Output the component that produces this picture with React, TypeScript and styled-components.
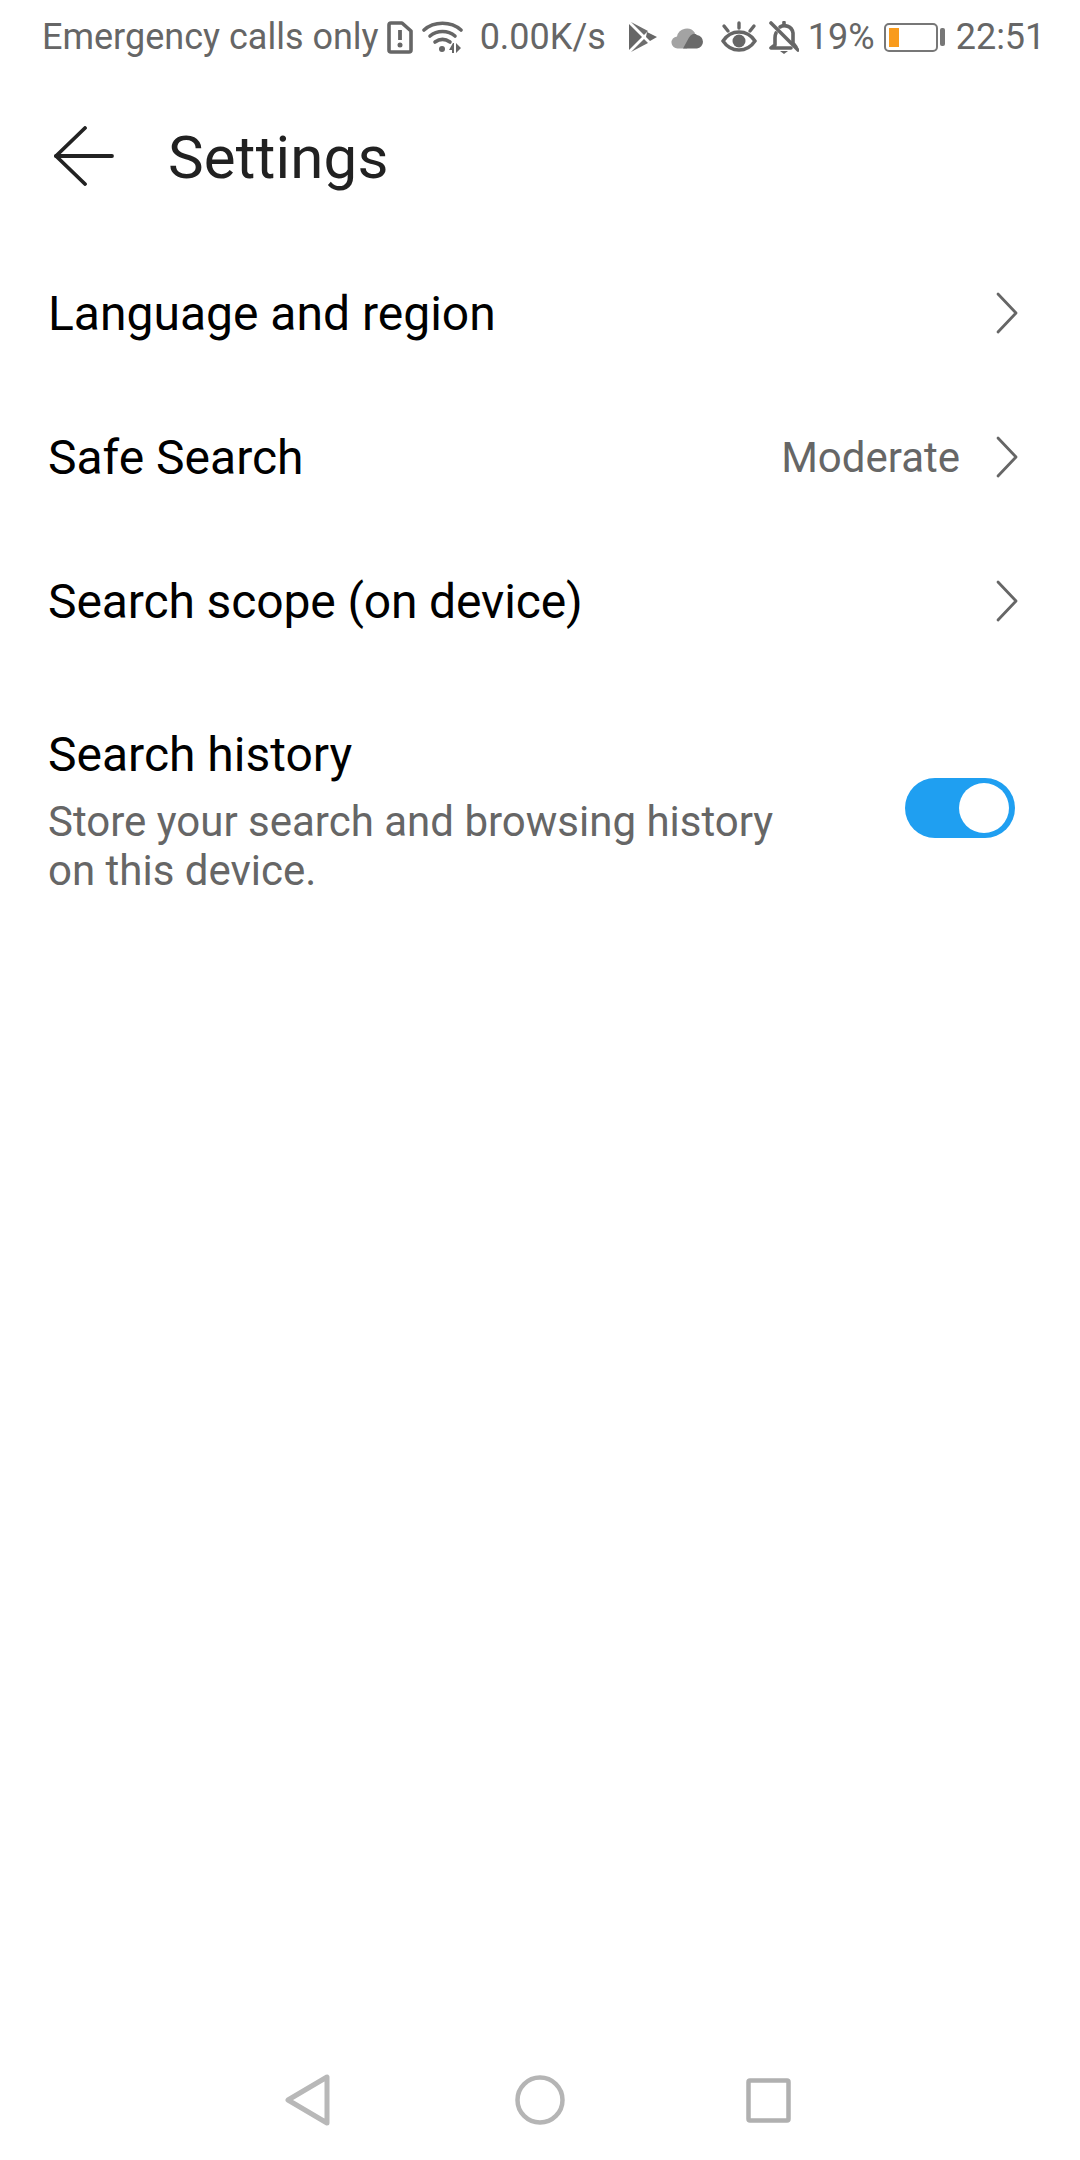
import React from "react";
import styled, { createGlobalStyle } from "styled-components";

const GlobalStyle = createGlobalStyle`
  html, body { margin: 0; padding: 0; background: #fff; }
  body { font-family: Roboto, "Liberation Sans", sans-serif; }
`;

function SimIcon() {
  return (
    <svg width="26" height="33" viewBox="0 0 26 33" fill="none">
      <path d="M4 2h11l9 8v19a2 2 0 0 1-2 2H4a2 2 0 0 1-2-2V4a2 2 0 0 1 2-2z" stroke="#666" strokeWidth="3.600" strokeLinejoin="round" />
      <path d="M13 9v10" stroke="#666" strokeWidth="3.800" />
      <circle cx="13" cy="24" r="2.500" fill="#666" />
    </svg>
  );
}

function WifiIcon() {
  return (
    <svg width="41" height="33" viewBox="0 0 41 33" fill="none" stroke="#666" strokeWidth="3.600" strokeLinecap="round">
      <path d="M2 9C12 0 29 0 39 9" />
      <path d="M8 15c7-6 18-6 25 0" />
      <path d="M13 21c5-3.500 10-3.500 15 0" />
      <circle cx="20" cy="28" r="3" fill="#666" stroke="none" />
      <path d="M31 22l-4 7h3v3h2V22zM34 22v10l5-5z" fill="#666" stroke="none" />
    </svg>
  );
}

function PlayIcon() {
  return (
    <svg width="28" height="30" viewBox="0 0 28 30">
      <path d="M0 2l13 13L0 28z" fill="#666" />
      <path d="M2 0l13 13 4-4z" fill="#6e6e6e" />
      <path d="M2 30l13-13 4 4z" fill="#6e6e6e" />
      <path d="M18 10l10 5-7 4-4-4z" fill="#666" />
    </svg>
  );
}

function CloudIcon() {
  return (
    <svg width="32" height="24" viewBox="0 0 32 24">
      <path d="M7 23.500a6 6 0 0 1-1-12A10 10 0 0 1 24 8l-8 15.500z" fill="#a3a3a3" />
      <path d="M12 23.500l6-11c3-4.500 6-4.500 8-2.500a6.800 6.800 0 0 1 0 13.500z" fill="#6a6a6a" />
    </svg>
  );
}

function EyeIcon() {
  return (
    <svg width="36" height="32" viewBox="0 0 36 32" fill="none" stroke="#666" strokeWidth="3.400" strokeLinecap="round">
      <path d="M2 20c8-12 24-12 32 0-8 12-24 12-32 0z" />
      <circle cx="18" cy="20" r="6.500" fill="#666" stroke="none" />
      <path d="M18 2v5M3 5l4 5M33 5l-4 5" />
    </svg>
  );
}

function MutedBellIcon() {
  return (
    <svg width="30" height="33" viewBox="0 0 30 33" fill="none" stroke="#666" strokeWidth="3.600" strokeLinecap="round" strokeLinejoin="round">
      <path d="M11 6c4-3 12-1 13 6v10l3 4" />
      <path d="M7 12c-1 2-1 3-1 5v7l-4 3h20" />
      <path d="M2 2l27 27" />
      <path d="M11 30h8l-4 3z" fill="#666" stroke="none" />
      <path d="M15 1.500v3" />
    </svg>
  );
}

function BackArrow() {
  return (
    <svg width="60" height="60" viewBox="0 0 60 60" fill="none" stroke="#222" strokeWidth="3.800" strokeLinecap="round" strokeLinejoin="round">
      <path d="M31 2L2 30l29 28" />
      <path d="M2 30h56" />
    </svg>
  );
}

function Chevron() {
  return (
    <svg width="22" height="42" viewBox="0 0 22 42" fill="none" stroke="#666" strokeWidth="2.800" strokeLinecap="round" strokeLinejoin="round">
      <path d="M2 2l18 19L2 40" />
    </svg>
  );
}

const Screen = styled.div`
  display: flex;
  flex-direction: column;
  width: 1080px;
  height: 2160px;
  overflow: hidden;
  background: #fff;
`;

const StatusBar = styled.div`
  display: flex;
  align-items: center;
  height: 74px;
  padding: 0 0 0 42px;
  color: #666;
  font-size: 36px;
`;

const StatusText = styled.span<{ $left?: number }>`
  margin-left: ${(p) => p.$left ?? 0}px;
  white-space: nowrap;
`;

const StatusGlyph = styled.span<{ $left: number }>`
  display: flex;
  margin-left: ${(p) => p.$left}px;
`;

const Battery = styled.div`
  display: flex;
  align-items: center;
  gap: 2px;
  margin-left: 9px;
`;

const BatteryShell = styled.div`
  display: flex;
  box-sizing: border-box;
  width: 54px;
  height: 29px;
  padding: 3px;
  border: 2px solid #777;
  border-radius: 5px;
`;

const BatteryFill = styled.div`
  width: 10px;
  background: #f99b1c;
`;

const BatteryCap = styled.div`
  width: 5px;
  height: 18px;
  border-radius: 2px;
  background: #777;
`;

const TitleBar = styled.header`
  display: flex;
  align-items: center;
  height: 112px;
  margin-top: 26px;
  padding-left: 54px;
`;

const Title = styled.h1`
  margin: 2px 0 0 54px;
  color: #212121;
  font-size: 60px;
  font-weight: 400;
  letter-spacing: 0.2px;
`;

const List = styled.div`
  display: flex;
  flex-direction: column;
  margin-top: 29px;
  padding: 0 62px 0 48px;
`;

const Row = styled.div`
  display: flex;
  align-items: center;
  height: 144px;
`;

const RowLabel = styled.div<{ $tight?: boolean }>`
  flex: 1;
  color: #000;
  font-size: 48px;
  letter-spacing: ${(p) => (p.$tight ? "-0.12px" : "normal")};
`;

const RowValue = styled.div`
  margin-right: 36px;
  color: #666;
  font-size: 42px;
`;

const ToggleRow = styled.div`
  display: flex;
  align-items: center;
  justify-content: space-between;
  margin-top: 50px;
`;

const ToggleCopy = styled.div`
  display: flex;
  flex-direction: column;
  width: 760px;
`;

const ToggleTitle = styled.div`
  color: #000;
  font-size: 48px;
  line-height: 64px;
`;

const ToggleHint = styled.div`
  margin-top: 10px;
  color: #666;
  font-size: 42px;
  line-height: 49px;
`;

const Switch = styled.div`
  display: flex;
  justify-content: flex-end;
  align-items: center;
  box-sizing: border-box;
  width: 110px;
  height: 60px;
  margin: 0 3px 3px 0;
  padding-right: 6px;
  border-radius: 30px;
  background: #1f9ff1;
`;

const Knob = styled.div`
  width: 50px;
  height: 50px;
  border-radius: 50%;
  background: #fff;
`;

const NavBar = styled.nav`
  display: flex;
  align-items: center;
  margin-top: auto;
  height: 120px;
  padding-left: 285px;
`;

const NavButton = styled.span<{ $left: number }>`
  display: flex;
  margin-left: ${(p) => p.$left}px;
`;

export default function App() {
  return (
    <Screen>
      <GlobalStyle />
      <StatusBar>
        <StatusText>Emergency calls only</StatusText>
        <StatusGlyph $left={8}><SimIcon /></StatusGlyph>
        <StatusGlyph $left={9}><WifiIcon /></StatusGlyph>
        <StatusText $left={17}>0.00K/s</StatusText>
        <StatusGlyph $left={23}><PlayIcon /></StatusGlyph>
        <StatusGlyph $left={14}><CloudIcon /></StatusGlyph>
        <StatusGlyph $left={18}><EyeIcon /></StatusGlyph>
        <StatusGlyph $left={12}><MutedBellIcon /></StatusGlyph>
        <StatusText $left={9}>19%</StatusText>
        <Battery>
          <BatteryShell><BatteryFill /></BatteryShell>
          <BatteryCap />
        </Battery>
        <StatusText $left={11}>22:51</StatusText>
      </StatusBar>

      <TitleBar>
        <BackArrow />
        <Title>Settings</Title>
      </TitleBar>

      <List>
        <Row>
          <RowLabel>Language and region</RowLabel>
          <Chevron />
        </Row>
        <Row>
          <RowLabel>Safe Search</RowLabel>
          <RowValue>Moderate</RowValue>
          <Chevron />
        </Row>
        <Row>
          <RowLabel $tight>Search scope (on device)</RowLabel>
          <Chevron />
        </Row>
        <ToggleRow>
          <ToggleCopy>
            <ToggleTitle>Search history</ToggleTitle>
            <ToggleHint>Store your search and browsing history on this device.</ToggleHint>
          </ToggleCopy>
          <Switch><Knob /></Switch>
        </ToggleRow>
      </List>

      <NavBar>
        <NavButton $left={0}>
          <svg width="45" height="52" viewBox="0 0 45 52" fill="none" stroke="#b8b8b8" strokeWidth="5" strokeLinejoin="round">
            <path d="M42 3v46L3 26z" />
          </svg>
        </NavButton>
        <NavButton $left={185}>
          <svg width="50" height="50" viewBox="0 0 50 50" fill="none" stroke="#b5b5b5" strokeWidth="4.500">
            <circle cx="25" cy="25" r="22.500" />
          </svg>
        </NavButton>
        <NavButton $left={181}>
          <svg width="45" height="45" viewBox="0 0 45 45" fill="none" stroke="#b0b0b0" strokeWidth="4.500" strokeLinejoin="round">
            <rect x="2.500" y="2.500" width="40" height="40" rx="1.500" />
          </svg>
        </NavButton>
      </NavBar>
    </Screen>
  );
}
